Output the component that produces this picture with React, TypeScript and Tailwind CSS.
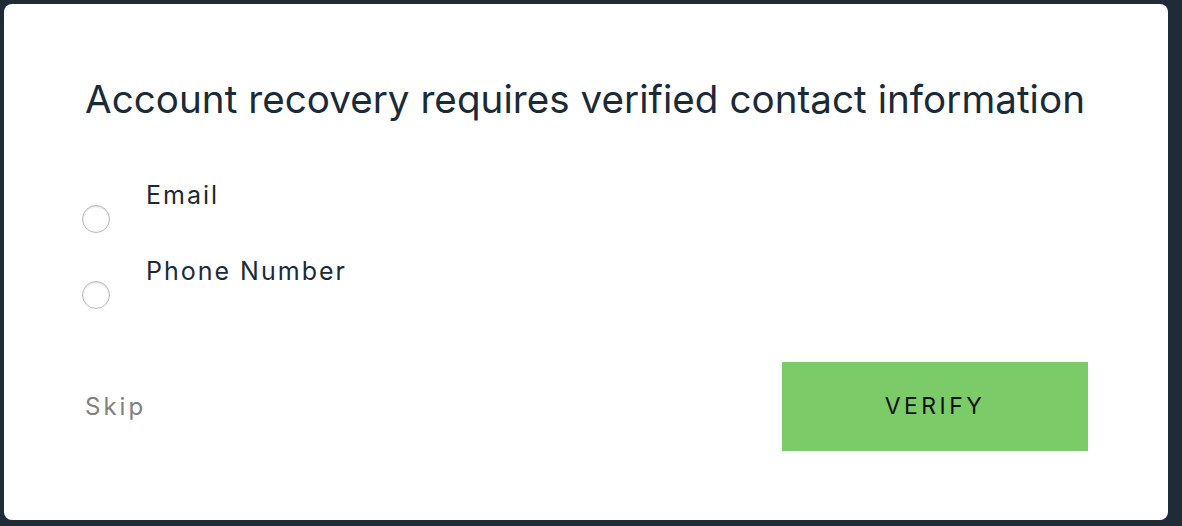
import { useState } from 'react';

const options = [
  { id: 'email', label: 'Email' },
  { id: 'phone', label: 'Phone Number' },
];

export default function App() {
  const [selected, setSelected] = useState<string | null>(null);

  return (
    <div className="h-[526px] w-full bg-[#1f2c37] p-[4px] font-['Inter',sans-serif]">
      <div className="flex h-[516px] w-[1164px] flex-col rounded-[8px] bg-white pl-[81px] pr-[80px] pt-[72px]">
        <h1 className="whitespace-nowrap text-[38.6px] font-normal leading-[46px] tracking-[0.04px] text-[#1b2a38]">
          Account recovery requires verified contact information
        </h1>

        <div className="mt-[58px] flex flex-col gap-[23px]">
          {options.map((o) => (
            <label key={o.id} className="flex cursor-pointer items-start">
              <input
                type="radio"
                name="contact"
                className="sr-only"
                checked={selected === o.id}
                onChange={() => setSelected(o.id)}
              />
              <span className="-ml-[3px] mt-[25px] flex h-[28px] w-[28px] items-center justify-center rounded-full border border-[#b8b8b8] bg-white shadow-[inset_0_1px_2px_rgba(0,0,0,0.14)]">
                {selected === o.id && <span className="h-[12px] w-[12px] rounded-full bg-[#1b2a38]" />}
              </span>
              <span className="ml-[36px] text-[25px] leading-[30px] tracking-[2px] text-[#1b2a38]">{o.label}</span>
            </label>
          ))}
        </div>

        <div className="mt-[53px] flex items-center justify-between">
          <button className="text-[24px] leading-[30px] tracking-[3px] text-[#808080]">Skip</button>
          <button className="flex h-[89px] w-[306px] items-center justify-center bg-[#7ccb69] text-[23px] uppercase tracking-[0.15em] text-[#111111]">
            Verify
          </button>
        </div>
      </div>
    </div>
  );
}
